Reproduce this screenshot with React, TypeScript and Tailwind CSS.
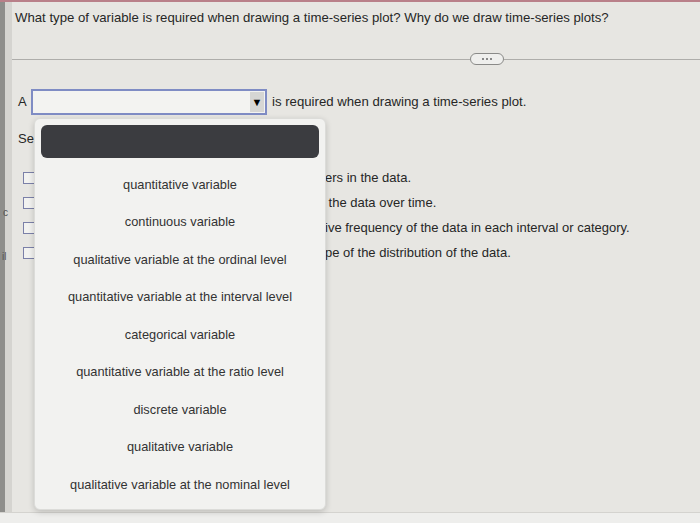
import { useState } from 'react';

const options = [
  "quantitative variable",
  "continuous variable",
  "qualitative variable at the ordinal level",
  "quantitative variable at the interval level",
  "categorical variable",
  "quantitative variable at the ratio level",
  "discrete variable",
  "qualitative variable",
  "qualitative variable at the nominal level"
];

// tails of the answer choices that peek out past the open menu
const reasons = [
  "ers in the data.",
  " the data over time.",
  "ive frequency of the data in each interval or category.",
  "pe of the distribution of the data."
];

export default function App() {
  const [selected, setSelected] = useState<string | null>(null);

  return (
    <div className="w-[700px] h-[523px] overflow-hidden flex flex-col bg-[#e7e6e2] text-[#262626]" style={{ fontFamily: '"Liberation Sans", Arial, sans-serif' }}>
      <div className="h-[2px] bg-[#b98089]" />

      <div className="flex flex-1 min-h-0">
        {/* window edge on the left */}
        <div className="w-[5px] bg-[#8e8e8b]" />
        <div className="w-[7px] bg-[#d5d4d0] flex flex-col text-[10px] text-[#555] leading-none">
          <span className="mt-[206px] -ml-[2px]">c</span>
          <span className="mt-[34px] -ml-[3px]">il</span>
        </div>

        <div className="flex-1 relative">
          <p className="pl-[3px] pt-[8px] text-[13.2px] leading-[16px]">
            What type of variable is required when drawing a time-series plot? Why do we draw time-series plots?
          </p>

          <div className="mt-[27px] flex items-center">
            <div className="w-[458px] h-px bg-[#aeadaa]" />
            <div className="w-[34px] h-[12px] rounded-full border border-[#8a8a88] bg-[#efefed] flex items-center justify-center gap-[2px]">
              <span className="w-[2px] h-[2px] rounded-full bg-[#666]" />
              <span className="w-[2px] h-[2px] rounded-full bg-[#666]" />
              <span className="w-[2px] h-[2px] rounded-full bg-[#666]" />
            </div>
            <div className="flex-1 h-px bg-[#aeadaa]" />
          </div>

          <div className="mt-[24px] flex items-center">
            <span className="ml-[6px] w-[13px] text-[13px]">A</span>
            <div className="w-[236px] h-[26px] border-2 border-[#7f8cc4] bg-[#f3f3f1] flex justify-end items-center pr-[1px]">
              <div className="w-[14px] h-[20px] bg-[#d6d6d4] flex items-center justify-center text-[11px] text-black">▼</div>
            </div>
            <span className="ml-[5px] text-[13.2px]">is required when drawing a time-series plot.</span>
          </div>

          <p className="ml-[6px] mt-[16px] text-[13px] leading-[16px]">Select all that apply.</p>

          <ul className="mt-[18px] flex flex-col">
            {reasons.map((r, i) => (
              <li key={i} className="h-[25px] flex items-center">
                <span className="ml-[11px] w-[12px] h-[12px] border-[1.5px] border-[#7b80a8] bg-[#f2f2f0]" />
                <span className="ml-[290px] text-[13px] whitespace-pre">{r}</span>
              </li>
            ))}
          </ul>

          {/* open select menu */}
          <div className="absolute left-[22px] top-[116px] w-[292px] h-[392px] rounded-md bg-[#f2f2f0] border border-[#dcdcd9] shadow-[0_2px_6px_rgba(0,0,0,0.18)] p-[6px] flex flex-col">
            <div className="h-[38px] rounded-md bg-[#3b3c40]" />
            <div className="mt-[8px] flex flex-col">
              {options.map((o) => (
                <button
                  key={o}
                  onClick={() => setSelected(o)}
                  className={"h-[37.5px] flex items-center justify-center text-[12.8px] text-[#333] " + (selected === o ? "bg-[#e2e2e0]" : "")}
                >
                  {o}
                </button>
              ))}
            </div>
          </div>
        </div>
      </div>

      <div className="h-[11px] border-t border-[#d4d3cf] bg-[#eeeeec]" />
    </div>
  );
}
